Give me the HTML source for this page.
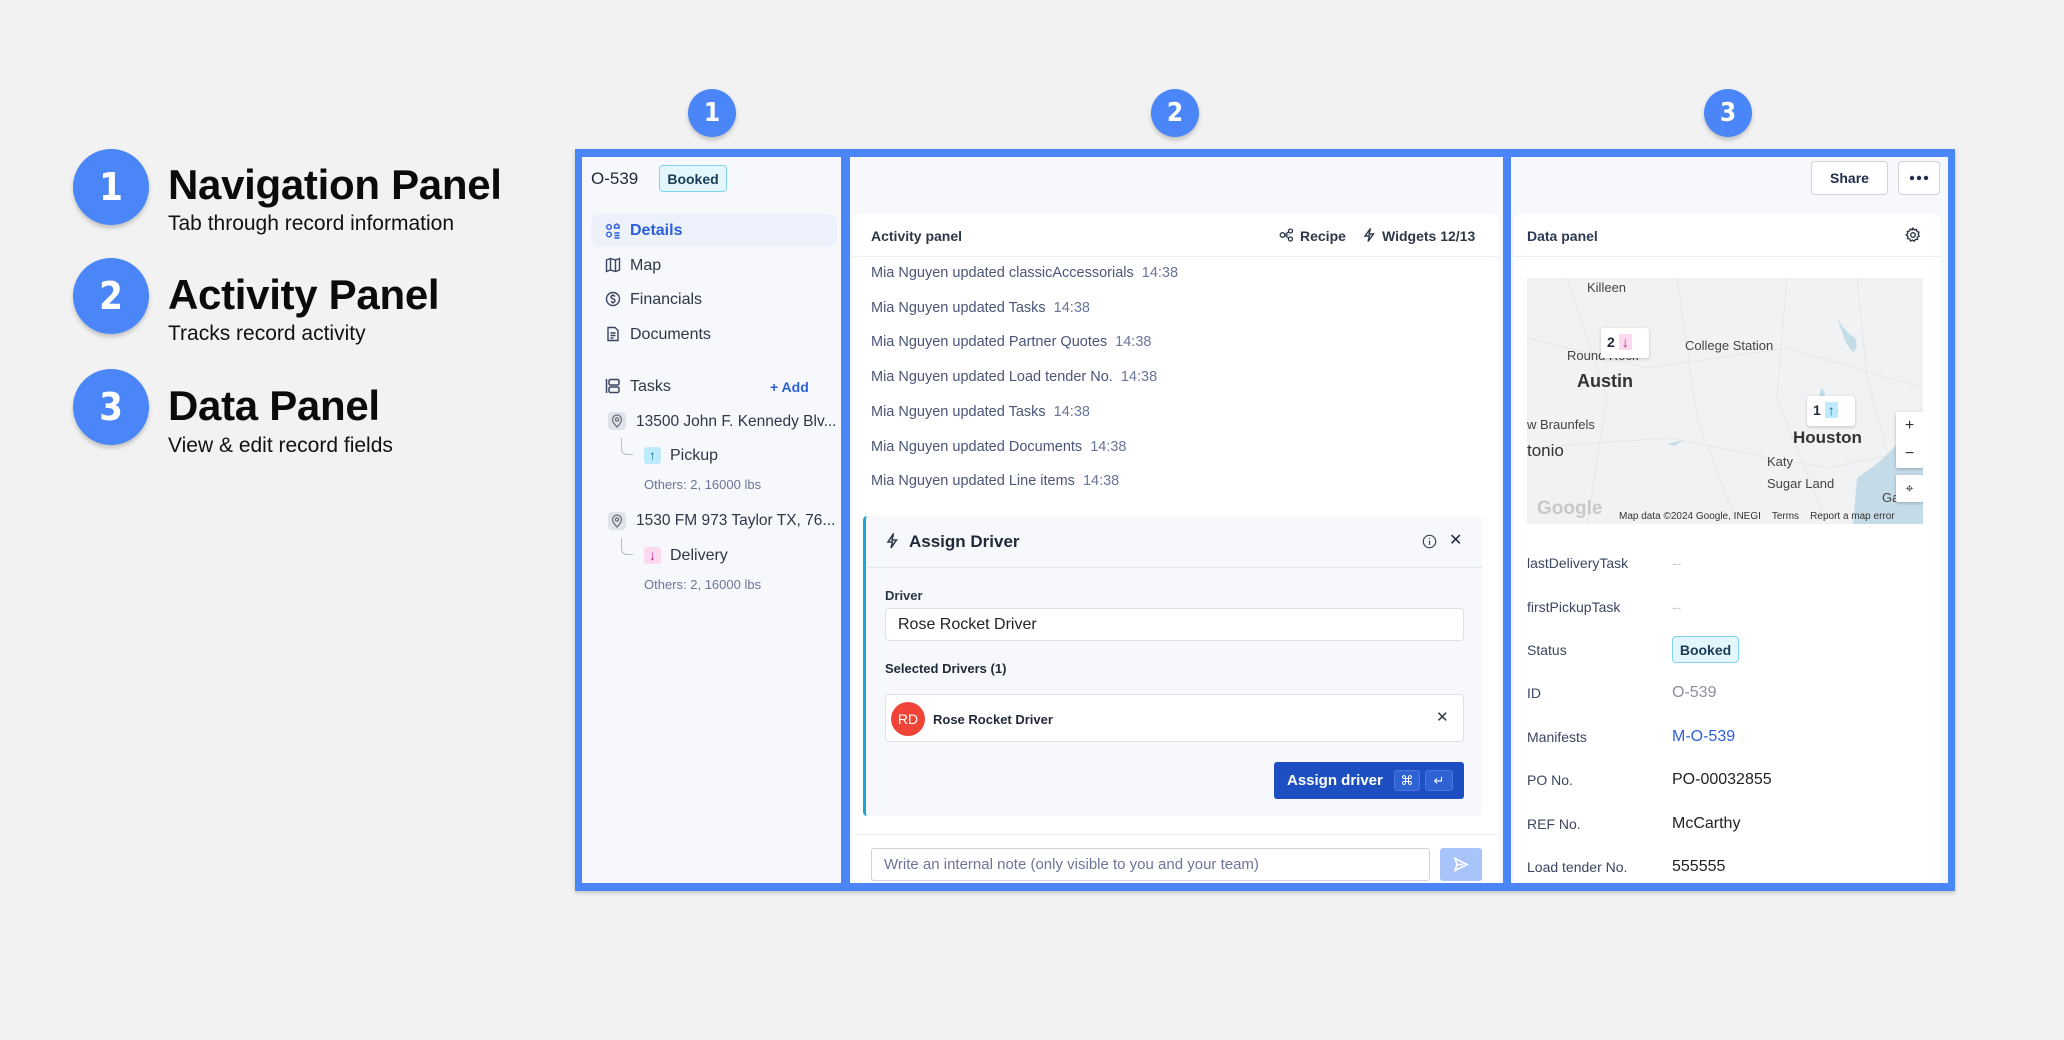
<!DOCTYPE html>
<html><head><meta charset="utf-8">
<style>
*{box-sizing:border-box;margin:0;padding:0}
body{width:2064px;height:1040px;background:#f2f2f2;position:relative;overflow:hidden;font-family:"Liberation Sans","DejaVu Sans",sans-serif;color:#1f2937}
.a{position:absolute;white-space:nowrap}
.circ{position:absolute;border-radius:50%;background:#4a86f7;color:#fff;font-weight:bold;display:flex;align-items:center;justify-content:center;font-family:"DejaVu Sans Condensed","Liberation Sans",sans-serif;box-shadow:0 3px 4px rgba(0,0,0,.2)}
.t{font-size:42px;font-weight:bold;color:#0b0b0b;letter-spacing:-0.3px}
.s{font-size:21px;color:#111}
.panel{position:absolute}
.nav{font-size:16px;color:#2d3748}
.act{font-size:14.5px;color:#4a5578}
.act span{color:#6b7599;margin-left:8px}
.badge{position:absolute;border:1.5px solid #7fd3ef;background:#e3f6fd;border-radius:4px;color:#1a3d55;font-weight:bold;font-size:14px;display:flex;align-items:center;justify-content:center}
.lbl{font-size:14px;color:#3b4560}
.val{font-size:16px;color:#222}
.ic{position:absolute}
</style></head><body>

<div class="circ" style="left:73px;top:149px;width:76px;height:76px;font-size:38px">1</div>
<div class="circ" style="left:73px;top:258px;width:76px;height:76px;font-size:38px">2</div>
<div class="circ" style="left:73px;top:369px;width:76px;height:76px;font-size:38px">3</div>
<div class="a t" style="left:168px;top:161px">Navigation Panel</div>
<div class="a s" style="left:168px;top:212px">Tab through record information</div>
<div class="a t" style="left:168px;top:271px">Activity Panel</div>
<div class="a s" style="left:168px;top:322px">Tracks record activity</div>
<div class="a t" style="left:168px;top:382px">Data Panel</div>
<div class="a s" style="left:168px;top:434px">View &amp; edit record fields</div>

<div class="circ" style="left:688px;top:89px;width:48px;height:48px;font-size:26px">1</div>
<div class="circ" style="left:1151px;top:89px;width:48px;height:48px;font-size:26px">2</div>
<div class="circ" style="left:1704px;top:89px;width:48px;height:48px;font-size:26px">3</div>

<div class="panel" style="left:575px;top:149px;width:1380px;height:742px;background:#4a86f7;box-shadow:0 2px 4px rgba(0,0,0,.2)"></div>

<!-- left panel -->
<div class="panel" style="left:582px;top:157px;width:259px;height:726px;background:#f7f8fc"></div>
<div class="a" style="left:591px;top:169px;font-size:17px;color:#1f2937">O-539</div>
<div class="badge" style="left:659px;top:165px;width:68px;height:27px">Booked</div>
<div class="panel" style="left:591px;top:214px;width:246px;height:33px;background:#ecf1fb;border-radius:8px"></div>
<svg class="ic" style="left:605px;top:223px" width="16" height="16" viewBox="0 0 16 16" fill="none" stroke="#2b5fd9" stroke-width="1.4"><circle cx="4" cy="4" r="2.3"/><circle cx="4" cy="11.5" r="2.3"/><path d="M9.5 2.5l2.3-1.5 2.3 1.5v2.5h-4.6z"/><path d="M9.5 10h5M9.5 12.5h5M9.5 15h5"/></svg>
<div class="a nav" style="left:630px;top:222px;color:#2b5fd9;font-weight:bold">Details</div>
<svg class="ic" style="left:605px;top:257px" width="16" height="16" viewBox="0 0 16 16" fill="none" stroke="#3b4560" stroke-width="1.4"><path d="M1.5 3l4-1.5 5 1.5 4-1.5v11.5l-4 1.5-5-1.5-4 1.5z"/><path d="M5.5 1.5v11.5M10.5 3v11.5"/></svg>
<div class="a nav" style="left:630px;top:257px">Map</div>
<svg class="ic" style="left:605px;top:291px" width="16" height="16" viewBox="0 0 16 16" fill="none" stroke="#3b4560" stroke-width="1.4"><circle cx="8" cy="8" r="6.5"/><path d="M10 5.5c-.5-.7-1.2-1-2-1-1.2 0-2 .7-2 1.6 0 2 4 1.3 4 3.5 0 1-1 1.7-2 1.7-.9 0-1.6-.4-2-1M8 3.3v1.2M8 11.5v1.2"/></svg>
<div class="a nav" style="left:630px;top:291px">Financials</div>
<svg class="ic" style="left:605px;top:326px" width="16" height="16" viewBox="0 0 16 16" fill="none" stroke="#3b4560" stroke-width="1.4"><path d="M3 1.5h7l3 3v10H3z"/><path d="M5.5 7h5M5.5 9.5h5M5.5 12h3"/></svg>
<div class="a nav" style="left:630px;top:326px">Documents</div>
<svg class="ic" style="left:605px;top:378px" width="16" height="16" viewBox="0 0 16 16" fill="none" stroke="#3b4560" stroke-width="1.5"><path d="M1.5 1v14"/><rect x="4" y="1.5" width="10" height="5.5" rx="1.5"/><rect x="4" y="9" width="10" height="5.5" rx="1.5"/></svg>
<div class="a nav" style="left:630px;top:378px">Tasks</div>
<div class="a" style="left:770px;top:379px;font-size:14px;color:#2b5fd9;font-weight:bold">+ Add</div>
<div class="panel" style="left:608px;top:412px;width:18px;height:18px;background:#dfe3ea;border-radius:4px"></div>
<svg class="ic" style="left:611px;top:414px" width="12" height="14" viewBox="0 0 12 14" fill="none" stroke="#6b7280" stroke-width="1.3"><path d="M6 13s4.5-4.5 4.5-7.5a4.5 4.5 0 0 0-9 0C1.5 8.5 6 13 6 13z"/><circle cx="6" cy="5.5" r="1.6"/></svg>
<div class="a" style="left:636px;top:413px;font-size:15.5px;color:#2d3748">13500 John F. Kennedy Blv...</div>
<div class="panel" style="left:621px;top:438px;width:12px;height:17px;border-left:1.5px solid #b8bfcc;border-bottom:1.5px solid #b8bfcc;border-bottom-left-radius:6px"></div>
<div class="panel" style="left:644px;top:447px;width:17px;height:17px;background:#bfeafb;border-radius:3px;color:#0e6e9a;font-size:14px;font-weight:bold;text-align:center;line-height:17px">↑</div>
<div class="a" style="left:670px;top:447px;font-size:16px;color:#2d3748">Pickup</div>
<div class="a" style="left:644px;top:477px;font-size:13px;color:#6b7599">Others: 2, 16000 lbs</div>
<div class="panel" style="left:608px;top:512px;width:18px;height:18px;background:#dfe3ea;border-radius:4px"></div>
<svg class="ic" style="left:611px;top:514px" width="12" height="14" viewBox="0 0 12 14" fill="none" stroke="#6b7280" stroke-width="1.3"><path d="M6 13s4.5-4.5 4.5-7.5a4.5 4.5 0 0 0-9 0C1.5 8.5 6 13 6 13z"/><circle cx="6" cy="5.5" r="1.6"/></svg>
<div class="a" style="left:636px;top:512px;font-size:15.5px;color:#2d3748">1530 FM 973 Taylor TX, 76...</div>
<div class="panel" style="left:621px;top:538px;width:12px;height:17px;border-left:1.5px solid #b8bfcc;border-bottom:1.5px solid #b8bfcc;border-bottom-left-radius:6px"></div>
<div class="panel" style="left:644px;top:547px;width:17px;height:17px;background:#fbd9ee;border-radius:3px;color:#c0248a;font-size:14px;font-weight:bold;text-align:center;line-height:17px">↓</div>
<div class="a" style="left:670px;top:547px;font-size:16px;color:#2d3748">Delivery</div>
<div class="a" style="left:644px;top:577px;font-size:13px;color:#6b7599">Others: 2, 16000 lbs</div>

<!-- middle panel -->
<div class="panel" style="left:850px;top:157px;width:653px;height:726px;background:#f7f8fc"></div>
<div class="panel" style="left:853px;top:214px;width:646px;height:669px;background:#fff;border-radius:6px 6px 0 0"></div>
<div class="panel" style="left:853px;top:256px;width:646px;height:1px;background:#eceff4"></div>
<div class="a" style="left:871px;top:228px;font-size:14px;font-weight:bold;color:#2d3748">Activity panel</div>
<svg class="ic" style="left:1279px;top:228px" width="16" height="14" viewBox="0 0 16 14" fill="none" stroke="#2d3748" stroke-width="1.3"><circle cx="3.5" cy="7" r="2.3"/><circle cx="11.5" cy="3" r="2"/><circle cx="11.5" cy="11" r="2"/><path d="M6 7h3.5M9.5 4l-3 2M9.5 10l-3-2"/></svg>
<div class="a" style="left:1300px;top:228px;font-size:14px;font-weight:bold;color:#2d3748">Recipe</div>
<svg class="ic" style="left:1362px;top:227px" width="14" height="16" viewBox="0 0 14 16" fill="none" stroke="#2d3748" stroke-width="1.4"><path d="M8.5 1.5L3 9h4.5l-1.5 5.5L11.5 7H7z"/></svg>
<div class="a" style="left:1382px;top:228px;font-size:14px;font-weight:bold;color:#2d3748">Widgets 12/13</div>
<div class="a act" style="left:871px;top:265px">Mia Nguyen updated classicAccessorials<span>14:38</span></div>
<div class="a act" style="left:871px;top:300px">Mia Nguyen updated Tasks<span>14:38</span></div>
<div class="a act" style="left:871px;top:334px">Mia Nguyen updated Partner Quotes<span>14:38</span></div>
<div class="a act" style="left:871px;top:369px">Mia Nguyen updated Load tender No.<span>14:38</span></div>
<div class="a act" style="left:871px;top:404px">Mia Nguyen updated Tasks<span>14:38</span></div>
<div class="a act" style="left:871px;top:439px">Mia Nguyen updated Documents<span>14:38</span></div>
<div class="a act" style="left:871px;top:473px">Mia Nguyen updated Line items<span>14:38</span></div>

<div class="panel" style="left:863px;top:516px;width:619px;height:300px;background:#f6f8fc;border-left:3.5px solid #1aa5d6;border-radius:4px"></div>
<div class="panel" style="left:867px;top:567px;width:615px;height:1px;background:#e3e7ee"></div>
<svg class="ic" style="left:885px;top:532px" width="14" height="18" viewBox="0 0 14 18" fill="none" stroke="#2d3748" stroke-width="1.5"><path d="M8.5 1.5L3 10h4.5l-1.5 6L11.5 8H7z"/></svg>
<div class="a" style="left:909px;top:532px;font-size:17px;font-weight:bold;color:#1f2937">Assign Driver</div>
<svg class="ic" style="left:1422px;top:534px" width="15" height="15" viewBox="0 0 15 15" fill="none" stroke="#3b4560" stroke-width="1.2"><circle cx="7.5" cy="7.5" r="6.2"/><path d="M7.5 6.5v4.5M7.5 4v1"/></svg>
<div class="a" style="left:1449px;top:530px;font-size:16px;font-weight:bold;color:#1f2937">✕</div>
<div class="a" style="left:885px;top:588px;font-size:13px;font-weight:bold;color:#2d3748">Driver</div>
<div class="panel" style="left:885px;top:608px;width:579px;height:33px;background:#fff;border:1px solid #dde1e8;border-radius:4px"></div>
<div class="a" style="left:898px;top:616px;font-size:16px;color:#222">Rose Rocket Driver</div>
<div class="a" style="left:885px;top:661px;font-size:13px;font-weight:bold;color:#1f2937">Selected Drivers (1)</div>
<div class="panel" style="left:885px;top:694px;width:579px;height:48px;background:#fff;border:1px solid #dde1e8;border-radius:4px"></div>
<div class="panel" style="left:891px;top:702px;width:34px;height:34px;border-radius:50%;background:#f04438;color:#fff;font-size:14px;text-align:center;line-height:34px">RD</div>
<div class="a" style="left:933px;top:712px;font-size:13px;font-weight:bold;color:#1f2937">Rose Rocket Driver</div>
<div class="a" style="left:1436px;top:708px;font-size:15px;color:#2d3748">✕</div>
<div class="panel" style="left:1274px;top:762px;width:190px;height:37px;background:#1e4fc2;border-radius:3px"></div>
<div class="a" style="left:1287px;top:772px;font-size:15px;font-weight:bold;color:#fff">Assign driver</div>
<div class="panel" style="left:1394px;top:770px;width:26px;height:21px;background:#2f62d2;border:1px solid #4a78dd;border-radius:3px;color:#fff;font-size:13px;text-align:center;line-height:19px">⌘</div>
<div class="panel" style="left:1425px;top:770px;width:28px;height:21px;background:#2f62d2;border:1px solid #4a78dd;border-radius:3px;color:#fff;font-size:13px;text-align:center;line-height:19px">↵</div>

<div class="panel" style="left:853px;top:834px;width:646px;height:1px;background:#eceff4"></div>
<div class="panel" style="left:871px;top:848px;width:559px;height:33px;background:#fff;border:1px solid #cfd4dc;border-radius:3px"></div>
<div class="a" style="left:884px;top:856px;font-size:15px;color:#6b7599">Write an internal note (only visible to you and your team)</div>
<div class="panel" style="left:1440px;top:848px;width:42px;height:33px;background:#a8c4fb;border-radius:3px"></div>
<svg class="ic" style="left:1453px;top:857px" width="16" height="15" viewBox="0 0 16 15" fill="none" stroke="#fff" stroke-width="1.6"><path d="M2 1.5l12 6-12 6 2-6zM4 7.5h6"/></svg>

<!-- right panel -->
<div class="panel" style="left:1511px;top:157px;width:437px;height:726px;background:#f7f8fc"></div>
<div class="panel" style="left:1811px;top:161px;width:77px;height:34px;background:#fff;border:1px solid #cfd4dc;border-radius:4px;font-size:14px;font-weight:bold;color:#1f2d4a;text-align:center;line-height:32px">Share</div>
<div class="panel" style="left:1898px;top:161px;width:42px;height:34px;background:#fff;border:1px solid #cfd4dc;border-radius:4px"></div>
<svg class="ic" style="left:1908px;top:175px" width="22" height="6"><circle cx="4" cy="3" r="2.2" fill="#1f2d4a"/><circle cx="11" cy="3" r="2.2" fill="#1f2d4a"/><circle cx="18" cy="3" r="2.2" fill="#1f2d4a"/></svg>
<div class="panel" style="left:1514px;top:214px;width:426px;height:669px;background:#fff;border-radius:6px 6px 0 0"></div>
<div class="panel" style="left:1514px;top:256px;width:426px;height:1px;background:#eceff4"></div>
<div class="a" style="left:1527px;top:228px;font-size:14px;font-weight:bold;color:#2d3a55">Data panel</div>
<svg class="ic" style="left:1905px;top:227px" width="16" height="16" viewBox="0 0 16 16" fill="none" stroke="#2d3748" stroke-width="1.4"><circle cx="8" cy="8" r="2.3"/><path d="M8 1.2l1.4 1.6 2.1-.4.5 2.1 2 .8-.8 2 1 1.7-1.8 1.2.1 2.1-2.1.1-1.2 1.8-1.7-1-2 .8-.8-2-2.1-.5.4-2.1L1.2 8l1.6-1.4-.4-2.1 2.1-.5.8-2 2 .8z"/></svg>

<!-- map -->
<div class="panel" style="left:1527px;top:278px;width:396px;height:246px;background:#f1f2f3;overflow:hidden">
<svg width="396" height="246" style="position:absolute;left:0;top:0">
<g stroke="#e6e7e9" stroke-width="1" fill="none"><path d="M0 60 L120 90 L260 70 L396 110"/><path d="M40 0 L80 120 L60 246"/><path d="M150 0 L170 140 L210 246"/><path d="M0 170 L140 160 L300 190 L396 170"/><path d="M260 0 L250 120 L300 246"/><path d="M330 0 L340 100 L380 246"/></g>
<path d="M310 40 q8 14 18 20 q4 10 -2 14 q-8-8-10-18z" fill="#c4dbe8"/>
<path d="M295 110 q6 8 0 18 l-5 -6z" fill="#c4dbe8"/>
<path d="M330 200 q30-20 45-40 l21-5 v91 h-70z" fill="#c4dbe8"/>
<path d="M140 166 l16 -4 -8 6z" fill="#c4dbe8"/>
</svg>
<div class="a" style="left:60px;top:2px;font-size:13px;color:#444">Killeen</div>
<div class="a" style="left:40px;top:70px;font-size:13px;color:#444">Round Rock</div>
<div class="a" style="left:50px;top:93px;font-size:18px;font-weight:bold;color:#333">Austin</div>
<div class="a" style="left:158px;top:60px;font-size:13px;color:#444">College Station</div>
<div class="a" style="left:266px;top:150px;font-size:17px;font-weight:bold;color:#333">Houston</div>
<div class="a" style="left:240px;top:176px;font-size:13px;color:#444">Katy</div>
<div class="a" style="left:240px;top:198px;font-size:13px;color:#444">Sugar Land</div>
<div class="a" style="left:0px;top:139px;font-size:13px;color:#444">w Braunfels</div>
<div class="a" style="left:0px;top:163px;font-size:17px;color:#333">tonio</div>
<div class="a" style="left:355px;top:212px;font-size:13px;color:#444">Galve</div>
<div class="a" style="left:10px;top:220px;font-size:19px;font-weight:bold;color:#c8c8c8">Google</div>
<div class="a" style="left:92px;top:233px;font-size:10px;color:#333">Map data ©2024 Google, INEGI &nbsp;&nbsp; Terms &nbsp;&nbsp; Report a map error</div>
<div class="panel" style="left:74px;top:50px;width:48px;height:30px;background:#fff;border-radius:3px;box-shadow:0 1px 3px rgba(0,0,0,.2);font-size:14px;font-weight:bold;padding:6px 0 0 6px">2 <span style="background:#fbd9ee;color:#c0248a;padding:0 3px">↓</span></div>
<div class="panel" style="left:280px;top:118px;width:48px;height:30px;background:#fff;border-radius:3px;box-shadow:0 1px 3px rgba(0,0,0,.2);font-size:14px;font-weight:bold;padding:6px 0 0 6px">1 <span style="background:#bfeafb;color:#0e6e9a;padding:0 3px">↑</span></div>
<div class="panel" style="left:369px;top:134px;width:27px;height:56px;background:#fff;box-shadow:0 1px 3px rgba(0,0,0,.25);border-radius:2px;font-size:16px;text-align:center;line-height:28px;color:#333">+<br>−</div>
<div class="panel" style="left:369px;top:197px;width:27px;height:27px;background:#fff;box-shadow:0 1px 3px rgba(0,0,0,.25);border-radius:2px;font-size:14px;text-align:center;line-height:27px;color:#333">⌖</div>
</div>

<div class="a lbl" style="left:1527px;top:555px">lastDeliveryTask</div><div class="a" style="left:1672px;top:555px;font-size:14px;color:#c4c9d4">--</div>
<div class="a lbl" style="left:1527px;top:599px">firstPickupTask</div><div class="a" style="left:1672px;top:599px;font-size:14px;color:#c4c9d4">--</div>
<div class="a lbl" style="left:1527px;top:642px">Status</div><div class="badge" style="left:1672px;top:636px;width:67px;height:27px">Booked</div>
<div class="a lbl" style="left:1527px;top:685px">ID</div><div class="a val" style="left:1672px;top:684px;color:#8a8f99">O-539</div>
<div class="a lbl" style="left:1527px;top:729px">Manifests</div><div class="a val" style="left:1672px;top:728px;color:#2b5fd9">M-O-539</div>
<div class="a lbl" style="left:1527px;top:772px">PO No.</div><div class="a val" style="left:1672px;top:771px">PO-00032855</div>
<div class="a lbl" style="left:1527px;top:816px">REF No.</div><div class="a val" style="left:1672px;top:815px">McCarthy</div>
<div class="a lbl" style="left:1527px;top:859px">Load tender No.</div><div class="a val" style="left:1672px;top:858px">555555</div>

</body></html>
